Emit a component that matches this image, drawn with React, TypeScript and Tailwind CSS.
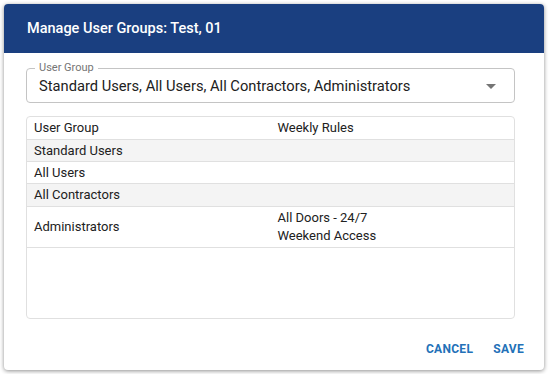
import React from "react";

const rows: { g: string; r: string[]; shade: boolean; h: string }[] = [
  { g: "Standard Users", r: [], shade: true, h: "h-[22px]" },
  { g: "All Users", r: [], shade: false, h: "h-[22px]" },
  { g: "All Contractors", r: [], shade: true, h: "h-[23px]" },
  { g: "Administrators", r: ["All Doors - 24/7", "Weekend Access"], shade: false, h: "h-[41px]" },
];

export default function App() {
  return (
    <div className="w-[550px] h-[374px] bg-white pt-[4px] pl-[4px]" style={{ fontFamily: "Roboto, 'Liberation Sans', sans-serif" }}>
      <div className="w-[540px] h-[366px] rounded-[4px] bg-white shadow-[0_1px_4px_rgba(0,0,0,0.45)] overflow-hidden flex flex-col">
        <div className="h-[49px] bg-[#1a3f80] flex items-center px-[23px] text-white text-[14.5px] font-medium">
          Manage User Groups: Test, 01
        </div>
        <div className="pl-[22px] pr-[29px] pt-[15px] flex flex-col">
          <div className="relative h-[35px] border border-[#c4c4c4] rounded-[4px] flex items-center pl-[12px] pr-[16px]">
            <span className="absolute -top-[7px] left-[8px] px-[4px] bg-white text-[11px] leading-[12px] text-[#757575]">User Group</span>
            <span className="flex-1 text-[14.7px] text-[#212121] pt-[2px]">Standard Users, All Users, All Contractors, Administrators</span>
            <svg width="10" height="5" viewBox="0 0 10 5" className="mt-[2px] mr-[2px]"><path d="M0 0 L10 0 L5 5 Z" fill="#757575" /></svg>
          </div>
          <div className="mt-[13px] h-[203px] border border-[#e0e0e0] rounded-[4px] text-[13px] text-[#212121]">
            <div className="h-[23px] flex items-center border-b border-[#e0e0e0]">
              <div className="w-1/2 pl-[7px]">User Group</div>
              <div className="w-1/2 pl-[7px]">Weekly Rules</div>
            </div>
            {rows.map((row) => (
              <div key={row.g} className={`${row.h} flex items-center border-b border-[#e0e0e0] ${row.shade ? "bg-[#f4f4f4]" : "bg-white"}`}>
                <div className="w-1/2 pl-[7px]">{row.g}</div>
                <div className="w-1/2 pl-[7px] leading-[18px]">
                  {row.r.map((x) => (
                    <div key={x}>{x}</div>
                  ))}
                </div>
              </div>
            ))}
          </div>
        </div>
        <div className="flex justify-end items-center gap-[20px] pr-[20px] mt-[21px] text-[12px] font-bold tracking-[0.3px] text-[#2371b8]">
          <span>CANCEL</span>
          <span>SAVE</span>
        </div>
      </div>
    </div>
  );
}
